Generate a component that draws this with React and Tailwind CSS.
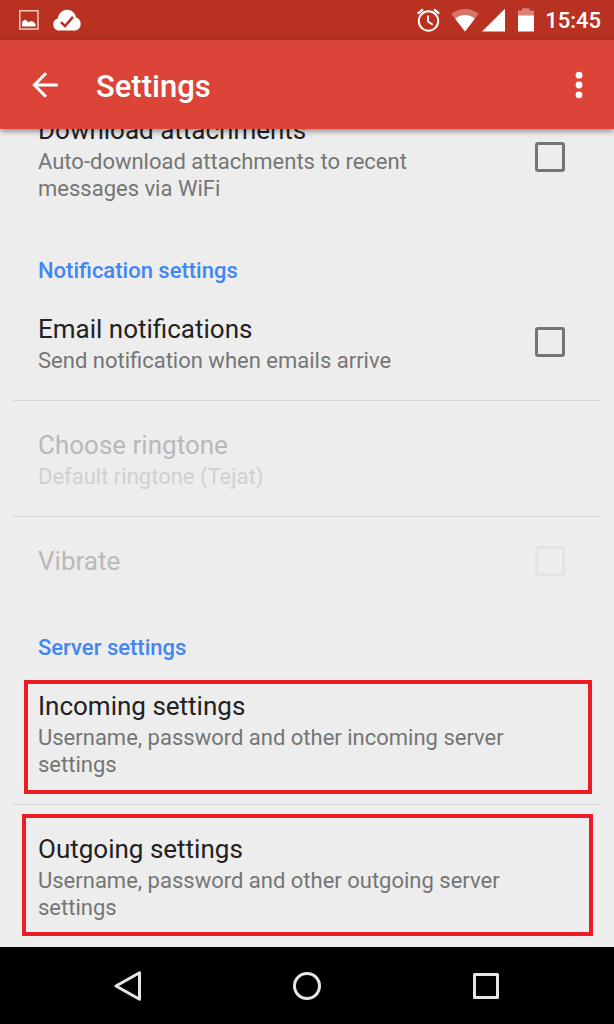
import React, { useLayoutEffect, useRef, useState } from "react";

const sections = [
  {
    heading: null,
    rows: [
      {
        id: "download",
        title: "Download attachments",
        summary: "Auto-download attachments to recent messages via WiFi",
        toggle: true,
      },
    ],
  },
  {
    heading: "Notification settings",
    rows: [
      {
        id: "email",
        title: "Email notifications",
        summary: "Send notification when emails arrive",
        toggle: true,
      },
      {
        id: "ringtone",
        title: "Choose ringtone",
        summary: "Default ringtone (Tejat)",
        disabled: true,
      },
      { id: "vibrate", title: "Vibrate", toggle: true, disabled: true },
    ],
  },
  {
    heading: "Server settings",
    rows: [
      {
        id: "incoming",
        title: "Incoming settings",
        summary: "Username, password and other incoming server settings",
        highlight: "top-[18px] bottom-[11px] left-6 right-[22px]",
      },
      {
        id: "outgoing",
        title: "Outgoing settings",
        summary: "Username, password and other outgoing server settings",
        highlight: "top-[9px] bottom-[11px] left-[22px] right-[21px]",
      },
    ],
  },
];

function StatusBar() {
  return (
    <div className="flex h-10 shrink-0 items-center justify-between bg-[#b93221] pl-[19px] pr-[13px] text-white">
      <div className="flex items-center gap-[14px]">
        <svg width="20" height="20" viewBox="0 0 20 20" aria-hidden="true">
          <rect x="0.8" y="0.8" width="18.2" height="18.2" fill="none" stroke="#f3d3cf" strokeWidth="1.4" />
          <path d="M3 16.5v-4.2l2.2-2.5 2 .4 2.3 2.4 2-1.500 2.600.400 2.400 2.600v2.400z" fill="#fff" />
        </svg>
        <svg width="28" height="22" viewBox="0 0 28 22" aria-hidden="true">
          <path
            d="M6.5 21.5C2.8 21.5.2 18.8.2 15.4c0-3 2-5.2 4.6-5.8C5.5 4.4 9.3.8 14 .8c4.7 0 8.2 3.1 9 7.8 2.8.7 4.7 3.2 4.7 6.300 0 3.700-2.700 6.600-6.300 6.600z"
            fill="#fff"
          />
          <path d="M8 13.200l4 4 8-9.400" fill="none" stroke="#b93221" strokeWidth="2.6" />
        </svg>
      </div>

      <div className="flex items-center">
        <svg className="mr-[11px]" width="23" height="24" viewBox="0 0 23 24" fill="none" stroke="#fff" aria-hidden="true">
          <circle cx="11.5" cy="13" r="9.7" strokeWidth="2" />
          <path d="M11 7.5v6l4.700 3.200" strokeWidth="1.8" />
          <path d="M.8 5.6L6 1.4M17 1.4l5.200 4.200" strokeWidth="2.2" />
        </svg>
        <svg className="mr-[3px]" width="28" height="24" viewBox="0 0 28 24" aria-hidden="true">
          <path d="M14 23.5L.3 5.8C4.300 2.600 9 1 14 1s9.700 1.600 13.700 4.800z" fill="#d77469" />
          <path d="M14 23.5L4.200 10.700C7 8.300 10.400 7 14 7s7 1.300 9.800 3.700z" fill="#fff" />
        </svg>
        <svg className="mr-[13px]" width="23" height="24" viewBox="0 0 23 24" aria-hidden="true">
          <path d="M0 23.500L23 .8v22.700z" fill="#fff" />
        </svg>
        <svg className="mr-[11px]" width="16" height="24" viewBox="0 0 16 24" aria-hidden="true">
          <path d="M4 .3h7.500v2.200H16V8H0V2.500h4z" fill="#d98379" />
          <path d="M0 7.500h16v16H0z" fill="#fff" />
        </svg>
        <span className="pt-[2px] text-[22px] font-medium leading-10">15:45</span>
      </div>
    </div>
  );
}

function Toolbar() {
  return (
    <header className="relative z-10 flex h-[89px] shrink-0 items-center bg-[#db4437] pl-8 pr-[23px] text-white shadow-[0_2px_6px_rgba(0,0,0,0.45)]">
      <button type="button" aria-label="Back" className="mr-[38px]">
        <svg className="block" width="26" height="26" viewBox="0 0 26 26" fill="none" stroke="#fff" strokeWidth="3" aria-hidden="true">
          <path d="M14 1.2L2.400 13 14 24.800M2.500 13H25.800" />
        </svg>
      </button>
      <h1 className="flex-1 pt-1 text-[31px] font-medium leading-10">Settings</h1>
      <button type="button" aria-label="More options" className="px-2">
        <svg className="block" width="8" height="28" viewBox="0 0 8 28" fill="#fff" aria-hidden="true">
          <circle cx="4" cy="4.2" r="3.4" />
          <circle cx="4" cy="14" r="3.4" />
          <circle cx="4" cy="23.8" r="3.4" />
        </svg>
      </button>
    </header>
  );
}

function SettingRow({ row, divider }) {
  const [checked, setChecked] = useState(false);
  const titleColor = row.disabled ? "text-[#b9b9b9]" : "text-[#212121]";
  const summaryColor = row.disabled ? "text-[#d0d0d0]" : "text-[#757575]";

  const text = (
    <>
      <span className={`block text-[26px] leading-[35px] ${titleColor}`}>{row.title}</span>
      {row.summary && (
        <span className={`block text-[22px] leading-[27px] ${summaryColor}`}>{row.summary}</span>
      )}
    </>
  );

  return (
    <li className="relative">
      {row.toggle ? (
        <label
          htmlFor={row.id}
          className="flex items-center justify-between gap-12 pt-[27px] pr-[49px] pb-[26px] pl-[38px]"
        >
          <span className="max-w-[420px]">{text}</span>
          <input
            id={row.id}
            type="checkbox"
            checked={checked}
            disabled={row.disabled}
            onChange={(e) => setChecked(e.target.checked)}
            className="mb-[2px] size-[30px] shrink-0 appearance-none rounded-[3px] border-3 border-[#757575] checked:bg-[#757575] disabled:border-[#e4e4e4]"
          />
        </label>
      ) : (
        <button
          type="button"
          disabled={row.disabled}
          className="block w-full pt-[27px] pr-[49px] pb-[26px] pl-[38px] text-left"
        >
          {text}
        </button>
      )}
      {row.highlight && (
        <div className={`pointer-events-none absolute border-4 border-[#ed1c24] ${row.highlight}`} />
      )}
      {divider && <div className="mx-[13px] h-px bg-[#d6d6d6]" />}
    </li>
  );
}

function NavBar() {
  return (
    <nav className="flex h-[77px] shrink-0 items-center justify-center gap-[149px] bg-black">
      <button type="button" aria-label="Back">
        <svg className="block" width="30" height="30" viewBox="0 0 30 30" fill="none" stroke="#e6e6e6" strokeWidth="3" strokeLinejoin="round" aria-hidden="true">
          <path d="M26.500 1.800v26.400L3 15z" />
        </svg>
      </button>
      <button type="button" aria-label="Home">
        <svg className="block" width="30" height="30" viewBox="0 0 30 30" fill="none" stroke="#e6e6e6" strokeWidth="3" aria-hidden="true">
          <circle cx="15" cy="15" r="12.5" />
        </svg>
      </button>
      <button type="button" aria-label="Recent apps">
        <svg className="block" width="30" height="30" viewBox="0 0 30 30" fill="none" stroke="#e6e6e6" strokeWidth="3" strokeLinejoin="round" aria-hidden="true">
          <rect x="3.5" y="3.5" width="23" height="23" />
        </svg>
      </button>
    </nav>
  );
}

export default function App() {
  const listRef = useRef(null);

  // Open the list at its end, where the server settings are
  useLayoutEffect(() => {
    listRef.current.scrollTop = listRef.current.scrollHeight;
  }, []);

  return (
    <div className="flex h-screen flex-col bg-[#ededed] font-[Roboto,sans-serif]">
      <StatusBar />
      <Toolbar />
      <main ref={listRef} className="min-h-0 flex-1 overflow-y-auto [scrollbar-width:none]">
        {sections.map((section, i) => (
          <section key={i}>
            {section.heading && (
              <h2 className="pt-7 pl-[38px] text-[22px] font-medium leading-[29px] text-[#4285f4]">
                {section.heading}
              </h2>
            )}
            <ul>
              {section.rows.map((row, j) => (
                <SettingRow key={row.id} row={row} divider={j < section.rows.length - 1} />
              ))}
            </ul>
          </section>
        ))}
      </main>
      <NavBar />
    </div>
  );
}
